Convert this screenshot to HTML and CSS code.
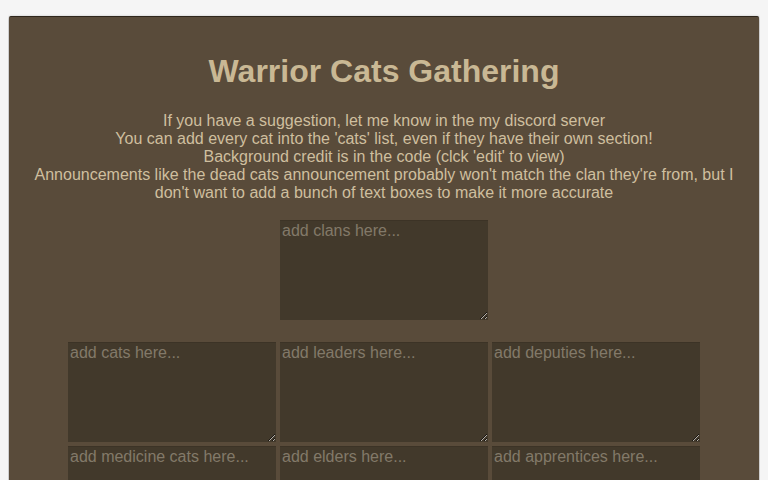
FILE: index.html
```html
<!DOCTYPE html>
<html lang="en">
<head>
<meta charset="utf-8">
<title>Warrior Cats Gathering</title>
<link rel="stylesheet" href="styles.css">
</head>
<body>
<main class="card">
  <h1 class="title">Warrior Cats Gathering</h1>
  <p class="intro">
    If you have a suggestion, let me know in the my discord server<br>
    You can add every cat into the 'cats' list, even if they have their own section!<br>
    Background credit is in the code (clck 'edit' to view)<br>
    Announcements like the dead cats announcement probably won't match the clan they're from, but I don't want to add a bunch of text boxes to make it more accurate
  </p>
  <div class="clans">
    <textarea class="box" placeholder="add clans here..."></textarea>
  </div>
  <div class="lists">
    <textarea class="box" placeholder="add cats here..."></textarea>
    <textarea class="box" placeholder="add leaders here..."></textarea>
    <textarea class="box" placeholder="add deputies here..."></textarea>
    <textarea class="box" placeholder="add medicine cats here..."></textarea>
    <textarea class="box" placeholder="add elders here..."></textarea>
    <textarea class="box" placeholder="add apprentices here..."></textarea>
  </div>
</main>
</body>
</html>
```
FILE: styles.css
```css
body {
  margin: 8px;
  background: #f5f5f5;
  font-family: "Liberation Sans", Arial, sans-serif;
}

.card {
  display: block;
  margin: 8px 1px 0;
  padding: 15px 20px 40px;
  background: #594b3a;
  border-top: 1px solid #2f271c;
  border-radius: 2px;
  box-shadow: 0 1px 3px rgba(0, 0, 0, 0.45);
  color: #cfbf9f;
  text-align: center;
}

.title {
  margin: 21px 0 22px;
  font-size: 32px;
  font-weight: bold;
  color: #c9b894;
}

.intro {
  margin: 0;
  font-size: 16px;
  line-height: 18px;
}

.clans {
  display: flex;
  justify-content: center;
  margin-top: 18px;
}

.lists {
  display: grid;
  grid-template-columns: repeat(3, 208px);
  gap: 4px;
  justify-content: center;
  margin-top: 22px;
}

.box {
  display: block;
  box-sizing: border-box;
  width: 208px;
  height: 100px;
  margin: 0;
  padding: 1px 2px 0;
  border: none;
  border-top: 1px solid #3c3326;
  background: #42392b;
  color: #cfbf9f;
  font-family: "Liberation Sans", Arial, sans-serif;
  font-size: 16px;
  line-height: 18px;
}

.box::placeholder {
  color: #827969;
}
```
